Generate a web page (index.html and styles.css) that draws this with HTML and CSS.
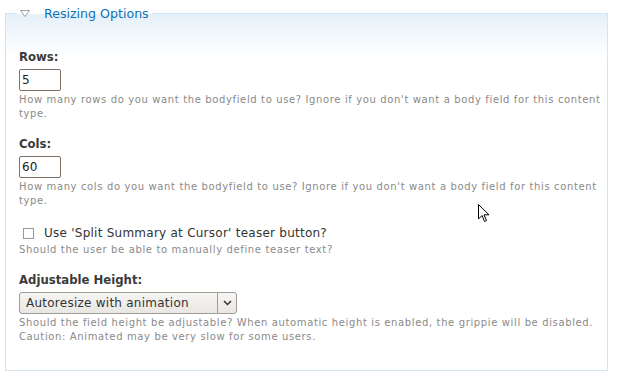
FILE: index.html
```html
<!DOCTYPE html>
<html>
<head>
<meta charset="utf-8">
<link rel="stylesheet" href="styles.css">
</head>
<body>
<fieldset class="box">
  <legend class="legend"><span class="tri"><svg width="10" height="7" viewBox="0 0 10 7"><path d="M0.5 0.5 H9.5 L5 6.5 Z" fill="#fff" stroke="#a0a0a0" stroke-width="1"/></svg></span><span class="legend-text">Resizing Options</span></legend>
  <div class="item">
    <label class="lbl">Rows:</label>
    <div class="input">5</div>
    <div class="desc">How many rows do you want the bodyfield to use? Ignore if you don't want a body field for this content type.</div>
  </div>
  <div class="item">
    <label class="lbl">Cols:</label>
    <div class="input">60</div>
    <div class="desc">How many cols do you want the bodyfield to use? Ignore if you don't want a body field for this content type.</div>
  </div>
  <div class="item item-check">
    <div class="check-row"><span class="checkbox"></span><span class="check-label">Use 'Split Summary at Cursor' teaser button?</span></div>
    <div class="desc">Should the user be able to manually define teaser text?</div>
  </div>
  <div class="item">
    <label class="lbl">Adjustable Height:</label>
    <div class="select"><span class="select-text">Autoresize with animation</span><span class="select-btn"><svg width="9" height="6" viewBox="0 0 9 6"><path d="M1 1 L4.5 4.5 L8 1" fill="none" stroke="#333" stroke-width="1.5"/></svg></span></div>
    <div class="desc">Should the field height be adjustable? When automatic height is enabled, the grippie will be disabled. Caution: Animated may be very slow for some users.</div>
  </div>
</fieldset>
<svg class="cursor" width="12" height="19" viewBox="0 0 12 19"><path d="M0.5 0.5 L0.5 15 L4 11.5 L6.5 17.5 L8.5 16.5 L6 10.8 L11 10.8 Z" fill="#fff" stroke="#000" stroke-width="1"/></svg>
</body>
</html>
```
FILE: styles.css
```css
html, body { margin: 0; padding: 0; background: #fff; }
body {
  font-family: "DejaVu Sans", Verdana, sans-serif;
  font-size: 12px;
  color: #494949;
  position: relative;
  width: 618px;
  height: 384px;
  overflow: hidden;
}
.box {
  margin: 6px 0 0 5px;
  width: 603px;
  box-sizing: border-box;
  height: 365px;
  border: 1px solid #d4e5f2;
  background: linear-gradient(to bottom, #e6f0f9 0px, #ffffff 45px);
  padding: 29px 1px 0 13px;
}
.legend {
  padding: 0 3px;
  margin-left: -2px;
  display: flex;
  align-items: center;
  height: 14px;
}
.tri { display: inline-flex; width: 10px; margin-left: 0; margin-right: 14px; }
.legend-text { color: #0b72b8; font-size: 12.6px; }
.item { margin-bottom: 15px; }
.item-check { margin-top: 17px; }
.lbl { display: block; font-weight: bold; font-size: 11.7px; line-height: 16px; margin-bottom: 4px; color: #3b3b3b; }
.input {
  width: 42px;
  height: 22px;
  box-sizing: border-box;
  border: 1px solid #7d7168;
  border-radius: 2px;
  padding: 2px 2px;
  font-size: 12px;
  line-height: 16px;
  color: #222;
  background: #fff;
}
.desc { font-size: 10px; color: #8a8a8a; line-height: 14px; margin-top: 2px; letter-spacing: 0.63px; }
.check-row { display: flex; align-items: center; height: 16px; }
.checkbox {
  width: 9px; height: 9px; border: 1px solid #999; margin: 0 10px 0 4px; background: #fff;
}
.check-label { color: #333; letter-spacing: 0.25px; }
.select {
  display: flex;
  width: 218px;
  height: 22px;
  box-sizing: border-box;
  border: 1px solid #a09c96;
  border-radius: 3px;
  background: linear-gradient(#f6f5f3, #e9e7e3);
  align-items: stretch;
}
.select-text { flex: 1; padding-left: 6px; line-height: 20px; color: #333; font-size: 12px; letter-spacing: 0.25px; }
.select-btn {
  width: 18px; border-left: 1px solid #a09c96; display: flex; align-items: center; justify-content: center;
}
.cursor { position: absolute; left: 478px; top: 204px; }
```
